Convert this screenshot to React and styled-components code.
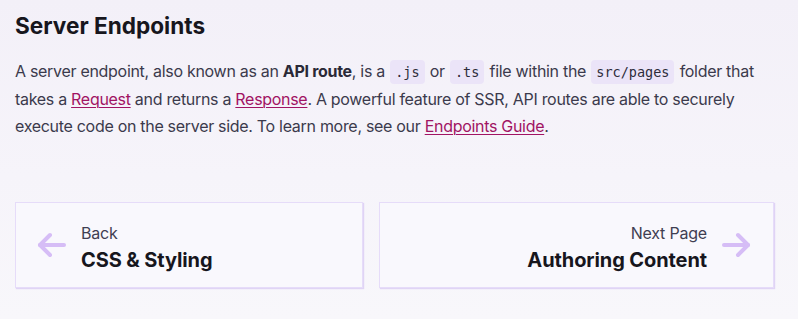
import React from "react";
import styled, { createGlobalStyle } from "styled-components";

const Global = createGlobalStyle`
  html, body { margin: 0; padding: 0; }
  body {
    background: linear-gradient(180deg, #f3f0f8 0%, #f6f4fa 55%, #f8f7fb 100%);
    min-height: 319px;
    font-family: Inter, "Noto Sans", sans-serif;
    color: #3b3a4c;
  }
`;

const Page = styled.main`
  padding: 10px 24px 0 15px;
  height: 319px;
  box-sizing: border-box;
`;

const Title = styled.h2`
  margin: 0;
  font-size: 22.6px;
  line-height: 32px;
  font-weight: 700;
  color: #17161d;
`;

const Para = styled.p`
  margin: 16px 0 0;
  font-size: 16px;
  line-height: 27px;
  letter-spacing: -0.3px;
  color: #3b3a4c;
`;

const Strong = styled.strong`
  font-weight: 700;
  color: #2a2937;
`;

const Code = styled.code`
  font-family: "DejaVu Sans Mono", "Liberation Mono", monospace;
  font-size: 13.5px;
  letter-spacing: 0;
  background: #ebe4f8;
  border-radius: 4px;
  padding: 4px 5px;
  margin: 0 1px;
  color: #2d2c3a;
`;

const Link = styled.a`
  color: #a11463;
  text-decoration: underline;
  text-underline-offset: 2px;
  text-decoration-thickness: 1px;
`;

const Nav = styled.nav`
  margin-top: 62px;
  display: grid;
  grid-template-columns: 348fr 395fr;
  gap: 16px;
`;

const Card = styled.a`
  display: flex;
  align-items: center;
  justify-content: ${(p) => (p.$next ? "flex-end" : "flex-start")};
  gap: 14px;
  height: 86px;
  box-sizing: border-box;
  padding: 0 22px 0 21px;
  background: #f9f8fd;
  border: 1px solid #e6dcf9;
  box-shadow: 1px 1px 1px rgba(180, 150, 235, 0.35);
  text-decoration: none;
`;

const Text = styled.div`
  display: flex;
  flex-direction: column;
  align-items: ${(p) => (p.$next ? "flex-end" : "flex-start")};
  padding-top: 5px;
`;

const Label = styled.span`
  font-size: 16px;
  line-height: 24px;
  letter-spacing: -0.2px;
  color: #3f3e52;
`;

const CardTitle = styled.span`
  font-size: 20px;
  line-height: 30px;
  font-weight: 700;
  letter-spacing: -0.1px;
  color: #17161d;
`;

const Arrow = ({ dir }) => (
  <svg width="30" height="30" viewBox="0 0 30 30" fill="none" stroke="#d6bdf6" strokeWidth="4" strokeLinecap="round" strokeLinejoin="round">
    {dir === "left" ? (
      <>
        <path d="M27 15H3" />
        <path d="M13 5L3 15l10 10" />
      </>
    ) : (
      <>
        <path d="M3 15h24" />
        <path d="M17 5l10 10-10 10" />
      </>
    )}
  </svg>
);

export default function App() {
  return (
    <>
      <Global />
      <Page>
        <Title>Server Endpoints</Title>
        <Para>
          A server endpoint, also known as an <Strong>API route</Strong>, is a <Code>.js</Code> or{" "}
          <Code>.ts</Code> file within the <Code>src/pages</Code> folder that takes a{" "}
          <Link href="#">Request</Link> and returns a <Link href="#">Response</Link>. A powerful feature of
          SSR, API routes are able to securely execute code on the server side. To learn more, see our{" "}
          <Link href="#">Endpoints Guide</Link>.
        </Para>
        <Nav>
          <Card href="#">
            <Arrow dir="left" />
            <Text>
              <Label>Back</Label>
              <CardTitle>CSS &amp; Styling</CardTitle>
            </Text>
          </Card>
          <Card href="#" $next>
            <Text $next>
              <Label>Next Page</Label>
              <CardTitle>Authoring Content</CardTitle>
            </Text>
            <Arrow dir="right" />
          </Card>
        </Nav>
      </Page>
    </>
  );
}
